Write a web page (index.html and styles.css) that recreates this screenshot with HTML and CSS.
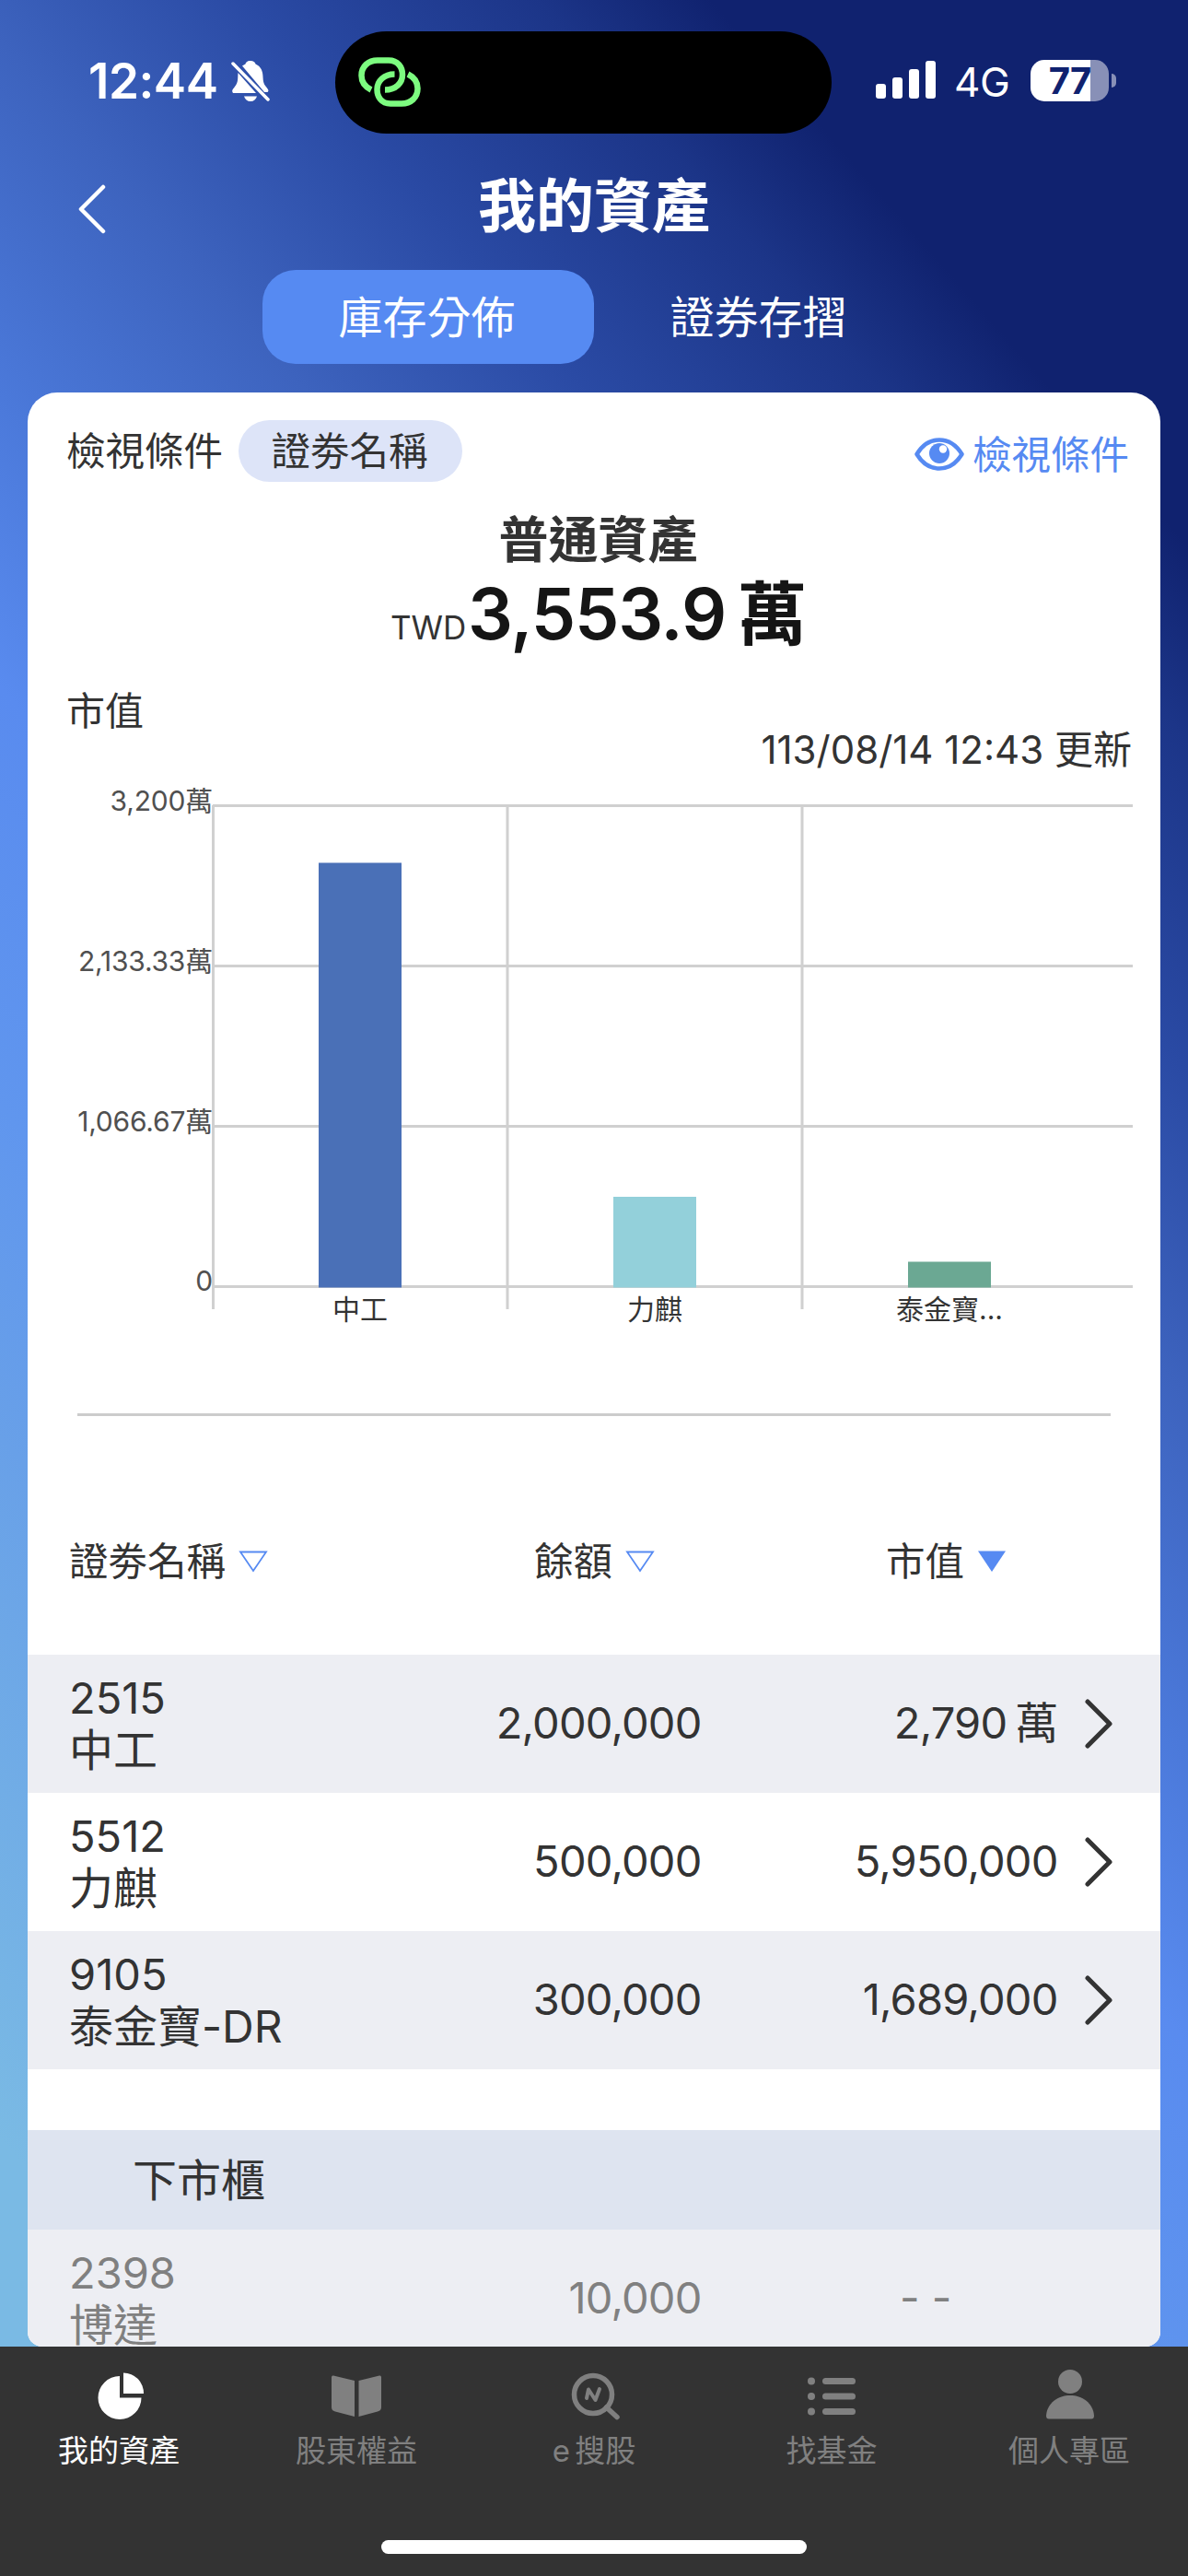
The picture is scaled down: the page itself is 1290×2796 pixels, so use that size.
FILE: index.html
```html
<!DOCTYPE html>
<html lang="zh-Hant">
<head>
<meta charset="utf-8">
<title>我的資產</title>
<link rel="stylesheet" href="styles.css">
</head>
<body>
<div class="screen">

	<div class="statusbar">
		<div class="clock">12:44</div>
		<svg class="bell" width="42" height="46" viewBox="0 0 42 46">
			<path d="M21 1C17 1 16 3 15.500 4.500L12 6.500L36 35H39.500C42 33 39 31 37 28C34 24 35 19 34 14C33 9 30 6 26.500 4.500C26 2.500 24 1 21 1Z" fill="#fff"/>
			<path d="M7.500 14C7 20 8 24 4 29C2 32 0 33 2 36H27Z" fill="#fff"/>
			<path d="M14 39.500H28C27 43 24.500 45 21 45S15 43 14 39.500Z" fill="#fff"/>
			<path d="M2 4L40 43" stroke="#fff" stroke-width="3.500" stroke-linecap="round"/>
		</svg>
		<div class="island">
			<svg width="68" height="54" viewBox="0 0 68 54" fill="none" stroke="#7dfc80" stroke-width="6.500">
				<path d="M14 35.500C7 32 3.500 27 3.500 20C3.500 10 11 3.500 21 3.500H33C43 3.500 48 11 48 19C48 28 41 35.500 29 35.500"/>
				<path d="M54 18.500C61 22 64.500 27 64.500 34C64.500 44 57 50.500 47 50.500H35C25 50.500 20.500 43 20.500 35C20.500 26 28 18.500 39.500 18.500"/>
			</svg>
		</div>
		<svg class="signal" width="65" height="42" viewBox="0 0 65 42" fill="#fff">
			<rect x="0" y="25" width="11" height="16" rx="3"/>
			<rect x="18" y="18" width="11" height="23" rx="3"/>
			<rect x="36" y="9" width="11" height="32" rx="3"/>
			<rect x="54" y="0" width="11" height="41" rx="3"/>
		</svg>
		<div class="network">4G</div>
		<div class="battery">77</div>
		<div class="nub"></div>
	</div>

	<div class="titlebar">
		<svg class="back" width="30" height="54" viewBox="0 0 30 54" fill="none">
			<path d="M27 3L3 27L27 51" stroke="#fff" stroke-width="4.500" stroke-linecap="round" stroke-linejoin="round"/>
		</svg>
		<h1>我的資產</h1>
	</div>

	<div class="tabs">
		<div class="tab active">庫存分佈</div>
		<div class="tab">證券存摺</div>
	</div>

	<div class="card">
		<div class="filter">
			<span>檢視條件</span>
			<span class="pill">證劵名稱</span>
			<span class="view">
				<svg width="54" height="36" viewBox="0 0 54 36">
					<path d="M2.500 18C8 9 16 2.500 27 2.500S46 9 51.500 18C46 27 38 33.500 27 33.500S8 27 2.500 18Z" fill="none" stroke="#568af2" stroke-width="4.500" stroke-linejoin="round"/>
					<circle cx="27" cy="17" r="11" fill="#568af2"/>
					<circle cx="31" cy="12.500" r="4.200" fill="#fff"/>
				</svg>
				檢視條件
			</span>
		</div>

		<h2>普通資產</h2>
		<div class="total"><small>TWD</small><b>3,553.9</b><b class="unit">萬</b></div>
		<div class="subtitle">市值</div>
		<div class="updated"><span>113/08/14 12:43</span> 更新</div>

		<svg class="chart" width="1230" height="600" viewBox="30 850 1230 600">
			<g stroke="#d0d0d0" stroke-width="3">
				<path d="M231 874.500H1230M231 1048.500H1230M231 1222.500H1230M231 1396.500H1230"/>
				<path d="M231.500 874V1421M551 874V1421M871 874V1421"/>
			</g>
			<rect x="346" y="936.500" width="90" height="461" fill="#4a70b7"/>
			<rect x="666" y="1299" width="90" height="98.500" fill="#93d0da"/>
			<rect x="986" y="1369.500" width="90" height="28" fill="#6ba893"/>
			<g class="ylabel">
				<text x="231" y="880">3,200萬</text>
				<text x="231" y="1054">2,133.33萬</text>
				<text x="231" y="1228">1,066.67萬</text>
				<text x="231" y="1401">0</text>
			</g>
			<g class="xlabel">
				<text x="391" y="1432">中工</text>
				<text x="711" y="1432">力麒</text>
				<text x="1031" y="1432">泰金寶...</text>
			</g>
		</svg>
		<div class="line"></div>

		<div class="row head">
			<div class="name">證劵名稱<svg width="32" height="24" viewBox="0 0 32 24"><path d="M2 1.500H30L16 22Z" fill="none" stroke="#568af2" stroke-width="1.800"/></svg></div>
			<div class="qty">餘額<svg width="32" height="24" viewBox="0 0 32 24"><path d="M2 1.500H30L16 22Z" fill="none" stroke="#568af2" stroke-width="1.800"/></svg></div>
			<div class="value">市值<svg width="32" height="24" viewBox="0 0 32 24"><path d="M1 0.500H31L16 23Z" fill="#568af2"/></svg></div>
		</div>
		<div class="row gray">
			<div class="name"><span>2515</span><br>中工</div>
			<div class="qty">2,000,000</div>
			<div class="value">2,790<i>萬</i></div>
			<svg class="go" width="30" height="54" viewBox="0 0 30 54" fill="none"><path d="M3 3L27 27L3 51" stroke="#333" stroke-width="5" stroke-linecap="round" stroke-linejoin="round"/></svg>
		</div>
		<div class="row">
			<div class="name"><span>5512</span><br>力麒</div>
			<div class="qty">500,000</div>
			<div class="value">5,950,000</div>
			<svg class="go" width="30" height="54" viewBox="0 0 30 54" fill="none"><path d="M3 3L27 27L3 51" stroke="#333" stroke-width="5" stroke-linecap="round" stroke-linejoin="round"/></svg>
		</div>
		<div class="row gray">
			<div class="name"><span>9105</span><br>泰金寶-DR</div>
			<div class="qty">300,000</div>
			<div class="value">1,689,000</div>
			<svg class="go" width="30" height="54" viewBox="0 0 30 54" fill="none"><path d="M3 3L27 27L3 51" stroke="#333" stroke-width="5" stroke-linecap="round" stroke-linejoin="round"/></svg>
		</div>
		<div class="section">下市櫃</div>
		<div class="row gray delisted">
			<div class="name"><span>2398</span><br>博達</div>
			<div class="qty">10,000</div>
			<div class="value">- -</div>
		</div>
	</div>

	<div class="tabbar">
		<div class="item on">
			<svg width="60" height="60" viewBox="0 0 60 60" fill="currentColor">
				<path d="M31 7A23.500 23.500 0 1 0 54.500 30.500H31Z"/>
				<path d="M35 3.500A22 22 0 0 1 57 26H35Z"/>
			</svg>
			<span>我的資產</span>
		</div>
		<div class="item">
			<svg width="60" height="60" viewBox="0 0 60 60" fill="currentColor">
				<path d="M5 6.500L28 12V51L7 45.500Q3 44.500 3 41V8.500Q3 6 5 6.500Z"/>
				<path d="M55 6.500L32.500 12V51L53 45.500Q57 44.500 57 41V8.500Q57 6 55 6.500Z"/>
			</svg>
			<span>股東權益</span>
		</div>
		<div class="item">
			<svg width="60" height="60" viewBox="0 0 60 60" fill="none" stroke="currentColor" stroke-linecap="round" stroke-linejoin="round">
				<circle cx="29" cy="27" r="20.500" stroke-width="5.500"/>
				<path d="M43.500 41L55 51.500" stroke-width="5.500"/>
				<path d="M22 31L24 21.500L31.500 33L36 21" stroke-width="4"/>
			</svg>
			<span>e 搜股</span>
		</div>
		<div class="item">
			<svg width="60" height="60" viewBox="0 0 60 60" fill="currentColor">
				<circle cx="8" cy="12.500" r="4"/><rect x="20" y="9" width="36" height="7" rx="3.500"/>
				<circle cx="8" cy="29" r="4"/><rect x="20" y="25.500" width="36" height="7" rx="3.500"/>
				<circle cx="8" cy="45.500" r="4"/><rect x="20" y="42" width="36" height="7" rx="3.500"/>
			</svg>
			<span>找基金</span>
		</div>
		<div class="item">
			<svg width="60" height="60" viewBox="0 0 60 60" fill="currentColor">
				<circle cx="31" cy="13" r="13"/>
				<path d="M8 53.500Q5 53.500 5 50C6 36 18 28 31 28S56 36 57 50Q57 53.500 54 53.500Z"/>
			</svg>
			<span>個人專區</span>
		</div>
	</div>
	<div class="home"></div>
</div>
</body>
</html>
```
FILE: styles.css
```css
body{
	margin:0;
	font-family:Inter,"Noto Sans CJK TC",sans-serif;
	color:#333;
}
h1,h2{
	margin:0;
}
svg{
	display:block;
	flex:none;
}
.screen{
	width:1290px;
	height:2796px;
	overflow:hidden;
	display:flex;
	flex-direction:column;
	background:linear-gradient(228.800deg,#10226f 390px,#1c3588 530px,#2a4aa4 768px,#3d63be 1000px,#4b79da 1254px,#598bef 1461px,#6096ee 1761px,#68a0e8 1997px,#7abae4 2500px);
}

/* status bar */
.statusbar{
	height:176px;
	box-sizing:border-box;
	flex:none;
	display:flex;
	align-items:center;
	padding-left:96px;
	color:#fff;
}
.clock{
	width:140px;
	font-size:53px;
	font-weight:600;
	line-height:60px;
	letter-spacing:-0.500px;
}
.bell{
	margin-left:15px;
}
.island{
	width:539px;
	height:111px;
	margin-left:71px;
	margin-top:2px;
	border-radius:56px;
	background:#000;
	display:flex;
	align-items:center;
	padding-left:25px;
	box-sizing:border-box;
}
.signal{
	margin-left:48px;
	margin-top:-2px;
}
.network{
	width:60px;
	margin-left:20px;
	margin-top:2px;
	font-size:44px;
	line-height:50px;
	letter-spacing:-0.500px;
}
.battery{
	width:85px;
	height:45px;
	margin-left:23px;
	margin-top:-2px;
	border-radius:15px;
	background:linear-gradient(90deg,#fff 65px,#8890b7 65px);
	color:#10226f;
	font-size:40px;
	font-weight:700;
	line-height:45px;
	text-align:center;
	letter-spacing:-1px;
}
.nub{
	width:5px;
	height:15px;
	margin-left:3px;
	margin-top:-2px;
	border-radius:0 5px 5px 0;
	background:#8890b7;
}

/* title and tabs */
.titlebar{
	height:117px;
	flex:none;
	display:flex;
	padding-left:85px;
}
.back{
	margin-top:24px;
}
h1{
	width:1060px;
	color:#fff;
	font-size:63px;
	font-weight:600;
	line-height:94px;
	text-align:center;
}
.tabs{
	height:133px;
	flex:none;
	display:flex;
	padding-left:285px;
}
.tab{
	width:357px;
	height:102px;
	padding-right:3px;
	border-radius:36px;
	color:#fff;
	font-size:48px;
	line-height:103px;
	text-align:center;
}
.active{
	background:#568af2;
}

/* card */
.card{
	width:1230px;
	height:2121px;
	flex:none;
	margin-left:30px;
	overflow:hidden;
	background:#fff;
	border-radius:32px 32px 16px 16px;
}
.filter{
	height:97px;
	padding:30px 34px 0 42px;
	box-sizing:border-box;
	display:flex;
	font-size:42.500px;
	line-height:67px;
}
.pill{
	width:241px;
	height:67px;
	margin-left:17px;
	padding-right:2px;
	border-radius:34px;
	background:#dde4f8;
	text-align:center;
}
.view{
	display:flex;
	align-items:center;
	gap:9px;
	margin-left:auto;
	padding-top:7px;
	color:#568af2;
}
h2{
	margin-top:25px;
	padding-left:9px;
	font-size:54px;
	font-weight:600;
	line-height:78px;
	text-align:center;
}
.total{
	height:82px;
	display:flex;
	align-items:baseline;
	padding-left:394px;
	line-height:80px;
	color:#151515;
}
.total small{
	width:84px;
	font-size:35px;
	color:#333;
}
.total b{
	width:278px;
	font-size:77px;
	font-weight:600;
	letter-spacing:-1.200px;
}
.total .unit{
	width:auto;
	margin-left:15px;
	font-size:75px;
}
.subtitle{
	margin-top:34px;
	padding-left:42px;
	font-size:42px;
	line-height:60px;
}
.updated{
	margin-top:-17px;
	padding-right:31px;
	font-size:42px;
	line-height:58px;
	text-align:right;
}
.chart{
	margin-top:7px;
}
.chart text{
	font-size:30px;
}
.ylabel{
	text-anchor:end;
	fill:#505050;
	letter-spacing:-0.200px;
}
.xlabel{
	text-anchor:middle;
	fill:#333;
}
.line{
	height:3px;
	margin:84px 54px 0;
	background:#ccc;
}

/* holdings */
.row{
	height:150px;
	display:grid;
	grid-template-columns:400px 330px 387px 1fr;
	align-items:center;
	font-size:47px;
}
.gray{
	background:#edeef3;
}
.name{
	padding-left:45px;
	font-size:48px;
	line-height:57px;
	white-space:nowrap;
}
.name span{
	font-size:47px;
}
.qty,.value{
	text-align:right;
	line-height:60px;
	padding-bottom:2px;
	letter-spacing:-0.800px;
	margin-right:-1.500px;
}
.value i{
	margin-left:9px;
	font-style:normal;
}
.go{
	margin-left:31px;
}
.head{
	height:259px;
	padding-top:57px;
	box-sizing:border-box;
}
.head div{
	display:flex;
	align-items:center;
	gap:14px;
	padding-bottom:0;
	font-size:42.500px;
	line-height:60px;
	letter-spacing:0;
}
.head .qty{
	padding-left:150px;
}
.head .value{
	padding-left:202px;
}
.section{
	height:108px;
	margin-top:66px;
	padding-left:114px;
	background:#dee4f0;
	font-size:48px;
	line-height:109px;
}
.delisted{
	color:#808080;
}
.delisted .value{
	padding-right:115px;
	letter-spacing:0;
}

/* bottom navigation */
.tabbar{
	height:249px;
	flex:none;
	display:flex;
	background:#333;
}
.item{
	width:258px;
	padding-top:25px;
	display:flex;
	flex-direction:column;
	align-items:center;
	color:#808080;
	font-size:33px;
	line-height:57px;
	word-spacing:-4px;
}
.on{
	color:#fff;
}
.home{
	position:absolute;
	left:414px;
	top:2757px;
	width:462px;
	height:15px;
	border-radius:8px;
	background:#fff;
}
```
